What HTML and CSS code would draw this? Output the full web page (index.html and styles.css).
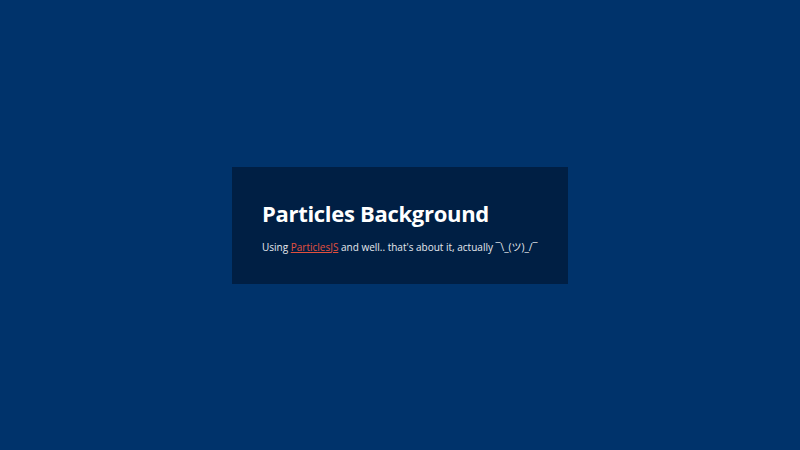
FILE: index.html
```html
<!DOCTYPE html>
<html>
<head>
<meta charset="utf-8">
<link rel="stylesheet" href="styles.css">
</head>
<body>
<div class="page">
  <div class="card">
    <h1 class="title">Particles Background</h1>
    <p class="text">Using <a class="link" href="#">ParticlesJS</a> and well.. that's about it, actually ¯\_(ツ)_/¯</p>
  </div>
</div>
</body>
</html>
```
FILE: styles.css
```css
html, body {
  margin: 0;
  padding: 0;
}
body {
  background: #00336b;
  font-family: "Open Sans", "Noto Sans CJK JP", sans-serif;
}
.page {
  width: 800px;
  height: 450px;
  display: flex;
  align-items: center;
  justify-content: center;
}
.card {
  background: #001f44;
  width: 336px;
  height: 117px;
  box-sizing: border-box;
  padding: 32px 30px 0 30px;
}
.title {
  margin: 0;
  color: #ffffff;
  font-size: 22px;
  font-weight: 700;
  line-height: 28px;
  letter-spacing: -0.3px;
}
.text {
  margin: 13px 0 0 0;
  color: #e6e9ee;
  font-size: 10px;
  line-height: 14px;
  white-space: nowrap;
}
.link {
  color: #e2503e;
  text-decoration: underline;
}
```
